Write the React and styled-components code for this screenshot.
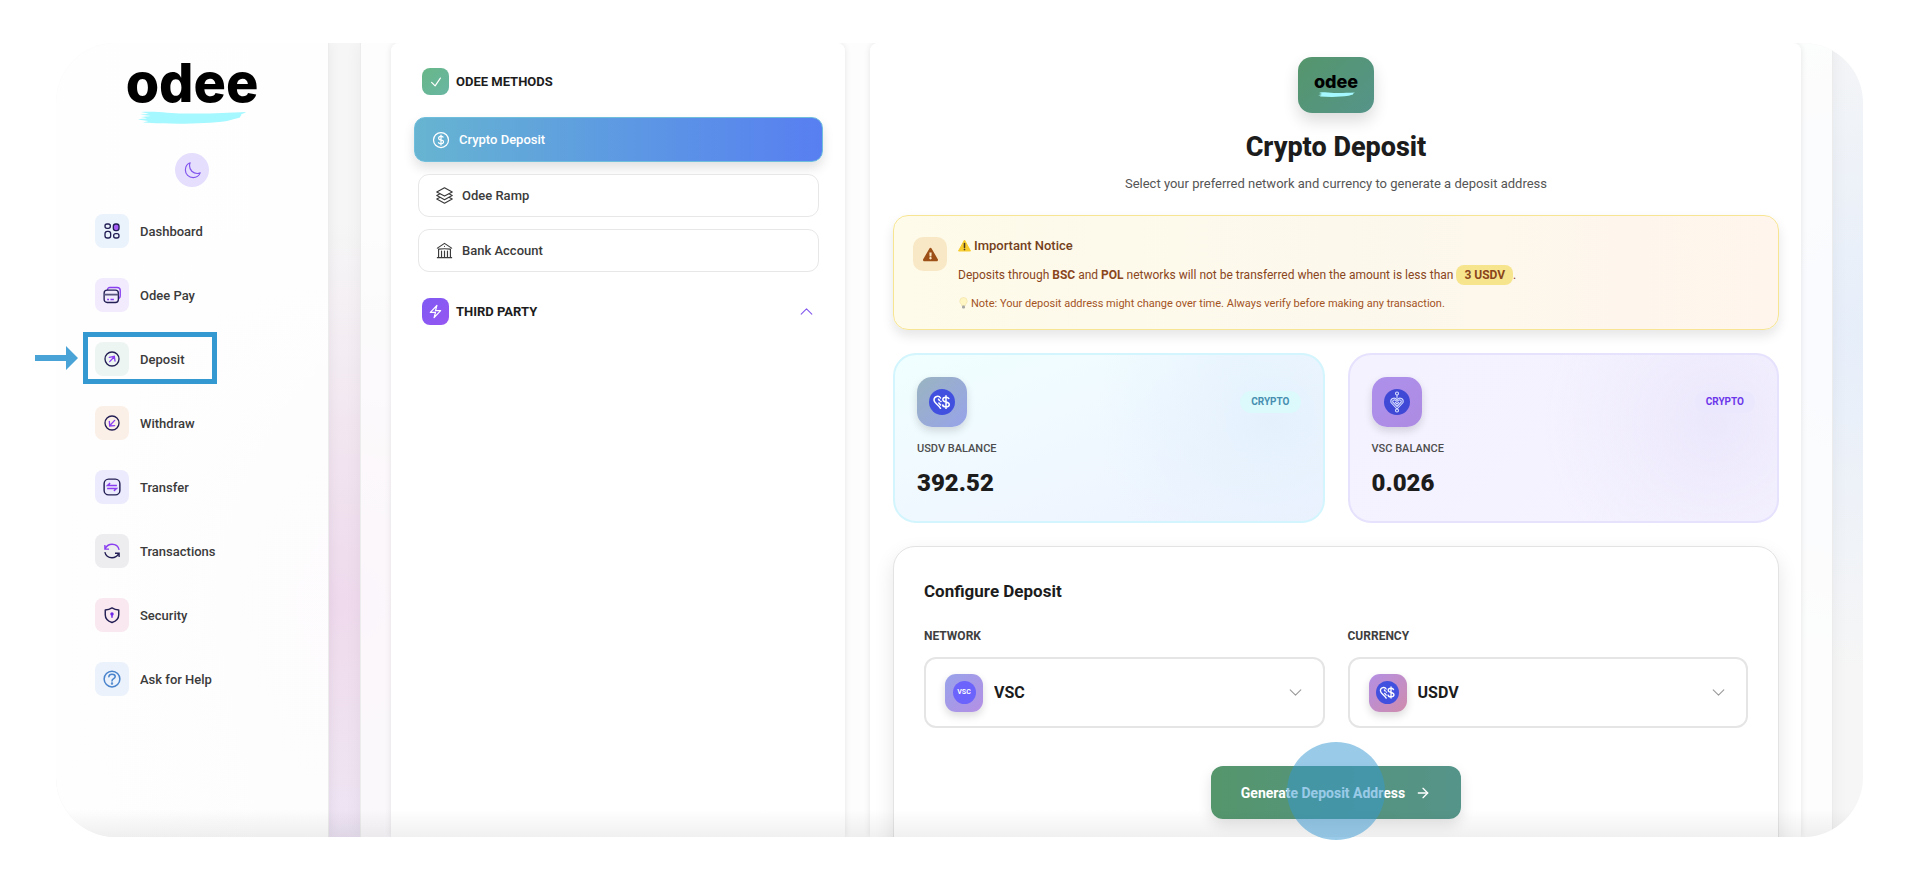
import React, { useState } from 'react';
import styled, { createGlobalStyle } from 'styled-components';
import {
  HiOutlineMoon,
  HiOutlineCheck,
  HiOutlineBolt,
  HiOutlineCurrencyDollar,
  HiOutlineSquare3Stack3D,
  HiOutlineBuildingLibrary,
  HiOutlineChevronUp,
  HiOutlineChevronDown,
} from 'react-icons/hi2';
import { FaExclamationTriangle } from 'react-icons/fa';
import { ArrowRight } from 'lucide-react';

const NAVY = '#231f55';
const VIOLET = '#8a3ff0';

const DashboardIcon = () => (
  <svg width='16' height='16' viewBox='0 0 24 24' fill='none' stroke={NAVY} strokeWidth='2'>
    <rect x='1.500' y='1.500' width='8' height='6.500' rx='3' />
    <rect x='14' y='1.500' width='8.500' height='10' rx='3.500' fill='#a55cf5' />
    <rect x='1.500' y='12.500' width='8.500' height='10' rx='3.500' />
    <rect x='14.500' y='16' width='8' height='6.500' rx='3' />
  </svg>
);

const PayIcon = () => (
  <svg width='18' height='18' viewBox='0 0 24 24' fill='none' strokeWidth='1.800'>
    <path d='M6 5.500C6 3 7.200 2 9.200 2h9.600C21.500 2 23 3.500 23 6v6.500c0 2.500-.8 3.700-2.600 4.100' stroke={VIOLET} />
    <rect x='1.500' y='5.500' width='19' height='16.500' rx='4' stroke={NAVY} />
    <path d='M1.500 11.500h19' stroke='#5b5880' strokeWidth='2.400' />
    <path d='M5.500 18h2.500M10 18h4.500' stroke={VIOLET} />
  </svg>
);

const DepositIcon = () => (
  <svg width='16' height='16' viewBox='0 0 24 24' fill='none' strokeWidth='2' strokeLinecap='round'>
    <circle cx='12' cy='12' r='10.500' stroke={NAVY} />
    <path d='M8.500 16l6.500-7M8 9.500l7.500-1.500 1 7' stroke={VIOLET} />
  </svg>
);

const WithdrawIcon = () => (
  <svg width='16' height='16' viewBox='0 0 24 24' fill='none' strokeWidth='2' strokeLinecap='round'>
    <circle cx='12' cy='12' r='10.500' stroke={NAVY} />
    <path d='M16 8l-6.500 7M8 9.500l.5 7 7.500-.5' stroke={VIOLET} />
  </svg>
);

const TransferIcon = () => (
  <svg width='18' height='18' viewBox='0 0 24 24' fill='none' strokeWidth='1.900'>
    <rect x='1.500' y='1.500' width='21' height='21' rx='6' stroke={NAVY} />
    <path d='M18.500 10H6l3.500-3.200M5.500 14H18l-3.500 3.200' stroke={VIOLET} />
  </svg>
);

const TransactionsIcon = () => (
  <svg width='18' height='18' viewBox='0 0 24 24' fill='none' strokeWidth='1.800'>
    <path d='M21.500 10.500C20.500 6 16.500 3 12 3 8 3 5 5 3 8.500M2.500 4v5.500h5.500' stroke={VIOLET} />
    <path d='M2.500 13.500C3.500 18 7.500 21 12 21c4 0 7-2 9-5.500M21.500 20v-5h-5.500' stroke={NAVY} />
  </svg>
);

const SecurityIcon = () => (
  <svg width='18' height='18' viewBox='0 0 24 24' fill='none'>
    <path
      d='M12 2.500c3 2 6 2.700 9 2.800v6.200c0 5-3.200 8.400-9 10.500-5.800-2.100-9-5.500-9-10.500V5.300c3-.1 6-.8 9-2.800z'
      stroke={NAVY}
      strokeWidth='1.900'
      strokeLinejoin='round'
    />
    <circle cx='12' cy='10.500' r='2.300' fill='#6f24e8' />
    <path d='M12 11v4.500' stroke='#6f24e8' strokeWidth='2' />
  </svg>
);

const HelpIcon = () => (
  <svg width='18' height='18' viewBox='0 0 24 24' fill='none' stroke='#4a84cc' strokeWidth='2' strokeLinecap='round'>
    <circle cx='12' cy='12' r='10.500' />
    <path d='M7.800 9C8 6.800 9.800 5.800 12 5.800c2.500 0 4.300 1.200 4.300 3.200 0 2.600-4.300 2.600-4.300 5.500' />
    <circle cx='12' cy='18' r='.6' />
  </svg>
);

const Brush = ({ width, height }) => (
  <svg width={width} height={height} viewBox='0 0 108 13' preserveAspectRatio='none' aria-hidden='true'>
    <path
      d='M3 1C22 0 34 3 50 2.500 70 3 90 1.500 108 1c-2 1.500-4 1.500-5 2.500 1 1-1 1.500-1 3-3 1-8 2-13 3.500C66 13 34 13.500 5 11.500c2-.8 4-.5 5-1.500L0 8.500c3-1 6-.5 9-1.300L3 6c4-.5 7-.5 10-1L2 3.500c4-.4 6-.2 9-.8z'
      fill='#a5f8ff'
    />
  </svg>
);

const UsdvCoin = ({ size }) => (
  <svg width={size} height={size} viewBox='0 0 26 26' fill='none' aria-hidden='true'>
    <circle cx='13' cy='13' r='13' fill='#4250e0' />
    <path
      d='M11.500 9C10 6.300 5 7 5 11c0 3 4.500 4.800 6.500 8.300M9.800 14l1.700 2M9.500 10.200l1 1.200M11.800 12.500h.2'
      stroke='#fff'
      strokeWidth='1.500'
      strokeLinecap='round'
    />
    <path
      d='M20 10.200c-.3-1.500-1.600-2-3.200-2s-3 .8-3 2.300c0 3.400 6.500 1.600 6.500 5 0 1.600-1.500 2.400-3.300 2.400s-3.400-.8-3.500-2.500M17 6.300v13.600'
      stroke='#fff'
      strokeWidth='1.500'
    />
  </svg>
);

const VscCoin = ({ size }) => (
  <svg width={size} height={size} viewBox='0 0 26 26' fill='none' stroke='#d5dcff' strokeWidth='1.100' aria-hidden='true'>
    <circle cx='13' cy='13' r='13' fill='#4048d6' stroke='none' />
    <circle cx='13' cy='4.500' r='1.500' />
    <circle cx='13' cy='21.500' r='1.500' />
    <path d='M13 6v3M13 20l6-6.500c1-3.500-3-6-6-3-3-3-7-.5-6 3L13 20' />
    <path d='M13 17.500l4.300-4.500c.4-2-2-3.200-4.300-.6-2.300-2.600-4.700-1.400-4.300.6z' />
    <path d='M11 13l2 2 2-2' />
  </svg>
);

const WarningSign = () => (
  <svg width='13' height='13' viewBox='0 0 26 26' aria-hidden='true'>
    <path d='M13 2l12 22H1z' fill='#f6cc2e' stroke='#f6cc2e' strokeWidth='2' strokeLinejoin='round' />
    <path d='M13 9v8' stroke='#4a3a20' strokeWidth='3' strokeLinecap='round' />
    <circle cx='13' cy='21' r='1.700' fill='#4a3a20' />
  </svg>
);

const Bulb = () => (
  <svg width='11' height='12' viewBox='0 0 22 24' aria-hidden='true'>
    <path d='M11 1a7.500 7.500 0 0 0-7.500 7.500c0 4 3.500 5 4 9h7c.5-4 4-5 4-9A7.500 7.500 0 0 0 11 1z' fill='#fff6c4' stroke='#eadb9a' />
    <rect x='8' y='17' width='6' height='6' rx='2' fill='#a9a9a4' />
  </svg>
);

const navItems = [
  { label: 'Dashboard', tint: '#eaf2fc', icon: <DashboardIcon /> },
  { label: 'Odee Pay', tint: '#f1ebfd', icon: <PayIcon /> },
  { label: 'Deposit', tint: '#edf5f3', icon: <DepositIcon /> },
  { label: 'Withdraw', tint: '#fbf0e7', icon: <WithdrawIcon /> },
  { label: 'Transfer', tint: '#ecebfd', icon: <TransferIcon /> },
  { label: 'Transactions', tint: '#ededf0', icon: <TransactionsIcon /> },
  { label: 'Security', tint: '#f9e8ef', icon: <SecurityIcon /> },
  { label: 'Ask for Help', tint: '#ebf2fb', icon: <HelpIcon /> },
];

const App = () => {
  const [network, setNetwork] = useState('VSC');
  const [currency, setCurrency] = useState('USDV');

  return (
    <Stage>
      <GlobalStyle />
      <Frame>
        <Sidebar>
          <Logo href='#home'>
            odee
            <Brush width={108} height={13} />
          </Logo>
          <ThemeButton type='button' aria-label='Toggle theme'>
            <HiOutlineMoon size={19} />
          </ThemeButton>
          <nav>
            {navItems.map((item) => (
              <NavItem key={item.label} href='#nav'>
                <NavIcon $tint={item.tint}>{item.icon}</NavIcon>
                {item.label}
              </NavItem>
            ))}
          </nav>
        </Sidebar>

        <Content>
          <Methods>
            <GroupTitle>
              <GroupIcon $from='#67b788' $to='#69b6a3'>
                <HiOutlineCheck size={14} strokeWidth={2} />
              </GroupIcon>
              ODEE METHODS
            </GroupTitle>
            <MethodList>
              <Method type='button' $active>
                <HiOutlineCurrencyDollar size={20} />
                Crypto Deposit
              </Method>
              <Method type='button'>
                <HiOutlineSquare3Stack3D size={19} />
                Odee Ramp
              </Method>
              <Method type='button'>
                <HiOutlineBuildingLibrary size={19} />
                Bank Account
              </Method>
            </MethodList>
            <GroupTitle>
              <GroupIcon $from='#7f5af3' $to='#9656f2'>
                <HiOutlineBolt size={15} strokeWidth={2} />
              </GroupIcon>
              THIRD PARTY
              <Collapse type='button' aria-label='Collapse third party'>
                <HiOutlineChevronUp size={17} />
              </Collapse>
            </GroupTitle>
          </Methods>

          <Panel>
            <Badge>
              odee
              <Brush width={37} height={5} />
            </Badge>
            <Title>Crypto Deposit</Title>
            <Subtitle>Select your preferred network and currency to generate a deposit address</Subtitle>

            <Notice>
              <NoticeIcon>
                <FaExclamationTriangle size={15} />
              </NoticeIcon>
              <div>
                <NoticeTitle>
                  <WarningSign /> Important Notice
                </NoticeTitle>
                <NoticeText>
                  Deposits through <b>BSC</b> and <b>POL</b> networks will not be transferred when the amount is less
                  than <Amount>3 USDV</Amount>.
                </NoticeText>
                <NoticeNote>
                  <Bulb /> Note: Your deposit address might change over time. Always verify before making any
                  transaction.
                </NoticeNote>
              </div>
            </Notice>

            <Columns>
              <Balance $bg='radial-gradient(circle at 88% 40%, #e4f1fd, transparent 45%), linear-gradient(160deg, #f0ffff, #f0f8ff 50%, #eef2ff)' $line='#d3f5fd'>
                <BalanceTop>
                  <CoinBox $size={50} $from='#9ab4c0' $to='#97a3ea'>
                    <UsdvCoin size={26} />
                  </CoinBox>
                  <Chip $bg='#dcf9fc' $color='#468fb0'>CRYPTO</Chip>
                </BalanceTop>
                <BalanceLabel>USDV BALANCE</BalanceLabel>
                <BalanceValue>392.52</BalanceValue>
              </Balance>
              <Balance $bg='radial-gradient(circle at 85% 40%, #ece8fc, transparent 45%), linear-gradient(135deg, #f4f2ff, #f6f3ff)' $line='#e6e1fd'>
                <BalanceTop>
                  <CoinBox $size={50} $from='#ad90ec' $to='#ad8be2'>
                    <VscCoin size={26} />
                  </CoinBox>
                  <Chip $bg='#ebe8fd' $color='#6c37ea'>CRYPTO</Chip>
                </BalanceTop>
                <BalanceLabel>VSC BALANCE</BalanceLabel>
                <BalanceValue>0.026</BalanceValue>
              </Balance>
            </Columns>

            <Configure>
              <h2>Configure Deposit</h2>
              <Columns>
                <Field>
                  <label htmlFor='network'>NETWORK</label>
                  <SelectBox>
                    <CoinBox $size={38} $from='#98a3ea' $to='#b48fe4'>
                      <VscMark>VSC</VscMark>
                    </CoinBox>
                    <select id='network' value={network} onChange={(e) => setNetwork(e.target.value)}>
                      <option>VSC</option>
                      <option>BSC</option>
                      <option>POL</option>
                    </select>
                    <HiOutlineChevronDown size={17} />
                  </SelectBox>
                </Field>
                <Field>
                  <label htmlFor='currency'>CURRENCY</label>
                  <SelectBox>
                    <CoinBox $size={38} $from='#b48fe4' $to='#cf8cac'>
                      <UsdvCoin size={23} />
                    </CoinBox>
                    <select id='currency' value={currency} onChange={(e) => setCurrency(e.target.value)}>
                      <option>USDV</option>
                      <option>VSC</option>
                    </select>
                    <HiOutlineChevronDown size={17} />
                  </SelectBox>
                </Field>
              </Columns>
              <Generate type='button'>
                Generate Deposit Address
                <ArrowRight size={16} strokeWidth={2} />
              </Generate>
            </Configure>
          </Panel>
        </Content>
      </Frame>

      <Pointer viewBox='0 0 43 24' aria-hidden='true'>
        <path d='M0 9h31V0l12 12-12 12v-9H0z' fill='#4aa3d6' />
      </Pointer>
      <Highlight />
      <Tap />
    </Stage>
  );
};

const GlobalStyle = createGlobalStyle`
  * {
    box-sizing: border-box;
  }
  body {
    margin: 0;
    background: #fff;
    color: #1c1c1c;
    font-family: Roboto, 'Liberation Sans', sans-serif;
    font-size: 13px;
  }
  button,
  select {
    font-family: inherit;
  }
  h1, h2, h3, p {
    margin: 0;
  }
`;

const Stage = styled.div`
  position: relative;
  padding: 43px 57px 43px 56px;
`;

const Frame = styled.div`
  position: relative;
  display: flex;
  height: calc(100vh - 86px);
  overflow: hidden;
  border-radius: 60px;
  background:
    radial-gradient(ellipse 500px 380px at 270px 560px, #eed9ec, transparent),
    radial-gradient(ellipse 400px 300px at 280px 900px, #e6e4fa, transparent),
    radial-gradient(ellipse 300px 340px at 100% 290px, #e6eefa, transparent),
    #f6f6f6;
  &::after {
    content: '';
    position: absolute;
    left: 0;
    right: 0;
    bottom: 0;
    height: 28px;
    background: linear-gradient(transparent, rgba(0, 0, 0, 0.06));
    pointer-events: none;
  }
`;

const Sidebar = styled.aside`
  flex: 0 0 273px;
  display: flex;
  flex-direction: column;
  background: linear-gradient(90deg, #fefefe, rgba(255, 255, 255, 0.92));
  border-right: 1px solid #ececec;
  box-shadow: 0 0 12px rgba(0, 0, 0, 0.06);
  nav {
    padding: 11px 0 0 39px;
  }
`;

const Logo = styled.a`
  display: flex;
  flex-direction: column;
  align-items: center;
  height: 90px;
  padding-top: 12px;
  color: #000;
  font: 800 54px/56px Inter, sans-serif;
  text-decoration: none;
`;

const ThemeButton = styled.button`
  align-self: center;
  display: grid;
  place-items: center;
  width: 34px;
  height: 34px;
  margin: 20px 0 16px;
  padding: 0;
  border: 0;
  border-radius: 50%;
  background: #e5defc;
  color: #8257ee;
`;

const NavItem = styled.a`
  display: flex;
  align-items: center;
  gap: 11px;
  height: 34px;
  margin-bottom: 30px;
  color: #3b3b3b;
  font-weight: 500;
  text-decoration: none;
`;

const NavIcon = styled.span`
  display: grid;
  place-items: center;
  width: 34px;
  height: 34px;
  border-radius: 8px;
  background: ${({ $tint }) => $tint};
`;

const Content = styled.main`
  flex: 1;
  display: flex;
  gap: 25px;
  margin: 0 30px 0 31px;
  padding: 0 31px 0 30px;
  background: rgba(255, 255, 255, 0.75);
  border: solid #ececec;
  border-width: 0 1px;
  box-shadow: 0 0 16px rgba(0, 0, 0, 0.05);
`;

const Methods = styled.section`
  flex: 0 0 454px;
  padding: 25px 26px 25px 27px;
  border-radius: 8px 8px 0 0;
  background: rgba(255, 255, 255, 0.93);
  box-shadow: 0 0 6px rgba(0, 0, 0, 0.1);
`;

const GroupTitle = styled.h3`
  display: flex;
  align-items: center;
  gap: 7px;
  padding: 0 4px;
  font-size: 13px;
  font-weight: 700;
`;

const GroupIcon = styled.span`
  display: grid;
  place-items: center;
  width: 27px;
  height: 27px;
  border-radius: 8px;
  color: #fff;
  background: linear-gradient(135deg, ${({ $from }) => $from}, ${({ $to }) => $to});
`;

const Collapse = styled.button`
  display: flex;
  margin-left: auto;
  padding: 0;
  border: 0;
  background: none;
  color: #8257ee;
`;

const MethodList = styled.div`
  display: flex;
  flex-direction: column;
  gap: 12px;
  padding: 22px 0 26px;
`;

const Method = styled.button`
  display: flex;
  align-items: center;
  gap: 8px;
  height: ${({ $active }) => ($active ? 45 : 43)}px;
  margin: ${({ $active }) => ($active ? '0 -4px' : '0')};
  padding: 0 16px;
  border: 1px solid ${({ $active }) => ($active ? '#6fbedb' : '#e7e7e7')};
  border-radius: 11px;
  background: ${({ $active }) => ($active ? 'linear-gradient(90deg, #66b4d1, #5c97e4 55%, #587ff1)' : '#fff')};
  box-shadow: ${({ $active }) => ($active ? '0 6px 12px rgba(0, 0, 0, 0.12)' : 'none')};
  color: ${({ $active }) => ($active ? '#fff' : '#3b3b3b')};
  font-size: 13px;
  font-weight: 500;
`;

const Panel = styled.section`
  flex: 1;
  display: flex;
  flex-direction: column;
  align-items: stretch;
  min-width: 0;
  padding: 14px 22px 14px 23px;
  border-radius: 8px 8px 0 0;
  background: rgba(255, 255, 255, 0.88);
  box-shadow: 0 0 6px rgba(0, 0, 0, 0.1);
`;

const Badge = styled.div`
  align-self: center;
  display: flex;
  flex-direction: column;
  align-items: center;
  flex: 0 0 56px;
  width: 76px;
  padding-top: 15px;
  border-radius: 14px;
  background: linear-gradient(135deg, #55966c, #559489);
  box-shadow: 0 8px 16px rgba(0, 0, 0, 0.14);
  color: #000;
  font: 800 18px/20px Inter, sans-serif;
`;

const Title = styled.h1`
  margin-top: 16px;
  font-size: 27px;
  line-height: 36px;
  font-weight: 800;
  text-align: center;
`;

const Subtitle = styled.p`
  margin: 9px 0 21px;
  color: #555;
  font-size: 13px;
  line-height: 20px;
  text-align: center;
`;

const Notice = styled.div`
  display: flex;
  gap: 11px;
  min-height: 115px;
  padding: 20px 19px;
  border: 1px solid #f7e593;
  border-radius: 15px;
  background: linear-gradient(90deg, #fffbea, #fcf8ec 50%, #fff5ec);
  box-shadow: 0 6px 12px rgba(0, 0, 0, 0.1);
`;

const NoticeIcon = styled.span`
  display: grid;
  place-items: center;
  width: 34px;
  height: 34px;
  margin-top: 1px;
  border-radius: 10px;
  background: #f8e8c6;
  color: #9c4f16;
`;

const NoticeTitle = styled.h3`
  display: flex;
  align-items: center;
  gap: 3px;
  height: 18px;
  color: #74401c;
  font-size: 13px;
  font-weight: 500;
`;

const NoticeText = styled.p`
  margin-top: 11px;
  color: #8a461c;
  font-size: 12px;
  line-height: 20px;
`;

const Amount = styled.b`
  display: inline-block;
  padding: 0 8px;
  border-radius: 8px;
  background: #f7e58e;
`;

const NoticeNote = styled.p`
  display: flex;
  align-items: center;
  gap: 2px;
  height: 16px;
  margin-top: 10px;
  color: #a3541f;
  font-size: 11px;
`;

const Columns = styled.div`
  display: grid;
  grid-template-columns: 1fr 1fr;
  gap: 23px;
`;

const Balance = styled.div`
  height: 170px;
  margin-top: 23px;
  padding: 22px;
  border: 2px solid ${({ $line }) => $line};
  border-radius: 23px;
  background: ${({ $bg }) => $bg};
`;

const BalanceTop = styled.div`
  display: flex;
  align-items: center;
  justify-content: space-between;
`;

const CoinBox = styled.span`
  display: grid;
  place-items: center;
  width: ${({ $size }) => $size}px;
  height: ${({ $size }) => $size}px;
  border-radius: ${({ $size }) => ($size > 40 ? 15 : 11)}px;
  background: linear-gradient(135deg, ${({ $from }) => $from}, ${({ $to }) => $to});
  box-shadow: 0 4px 8px rgba(0, 0, 0, 0.14);
`;

const Chip = styled.span`
  padding: 0 11px;
  border-radius: 11px;
  background: ${({ $bg }) => $bg};
  color: ${({ $color }) => $color};
  font-size: 10px;
  line-height: 22px;
  font-weight: 700;
`;

const BalanceLabel = styled.p`
  margin-top: 14px;
  color: #4d4d4d;
  font-size: 11px;
  line-height: 16px;
  font-weight: 500;
`;

const BalanceValue = styled.p`
  margin-top: 10px;
  font-size: 24px;
  line-height: 32px;
  font-weight: 900;
`;

const Configure = styled.section`
  display: flex;
  flex-direction: column;
  margin-top: 23px;
  padding: 32px 30px 40px;
  border: 1px solid #e3e3e3;
  border-radius: 22px;
  background: #fff;
  box-shadow: 0 8px 20px rgba(0, 0, 0, 0.1);
  h2 {
    margin-bottom: 23px;
    font-size: 17px;
    line-height: 24px;
    font-weight: 700;
  }
`;

const Field = styled.div`
  label {
    display: block;
    color: #3f3f3f;
    font-size: 12px;
    line-height: 20px;
    font-weight: 700;
  }
`;

const SelectBox = styled.div`
  display: flex;
  align-items: center;
  gap: 11px;
  height: 71px;
  margin-top: 11px;
  padding: 0 19px;
  border: 2px solid #e5e5e5;
  border-radius: 12px;
  color: #9a9a9a;
  select {
    flex: 1;
    padding: 0;
    border: 0;
    appearance: none;
    background: none;
    color: #1c1c1c;
    font-size: 16px;
    font-weight: 700;
  }
`;

const VscMark = styled.span`
  width: 23px;
  border-radius: 50%;
  background: #6b63fb;
  color: #fff;
  font-size: 7px;
  line-height: 23px;
  font-weight: 700;
  text-align: center;
`;

const Generate = styled.button`
  align-self: center;
  display: flex;
  align-items: center;
  gap: 10px;
  height: 53px;
  margin-top: 38px;
  padding: 0 30px;
  border: 0;
  border-radius: 12px;
  background: linear-gradient(90deg, #55966c, #559480 65%, #559489);
  box-shadow: 0 6px 14px rgba(0, 0, 0, 0.12);
  color: #fff;
  font-size: 14px;
  font-weight: 700;
`;

const Pointer = styled.svg`
  position: absolute;
  top: 346px;
  left: 35px;
  width: 43px;
  height: 24px;
`;

const Highlight = styled.div`
  position: absolute;
  top: 332px;
  left: 83px;
  width: 134px;
  height: 52px;
  border: 5px solid #3498d1;
  pointer-events: none;
`;

/* tap marker sits on the centre of the deposit panel */
const Tap = styled.div`
  position: absolute;
  top: 742px;
  left: calc(50% + 376px);
  width: 98px;
  height: 98px;
  transform: translateX(-50%);
  border-radius: 50%;
  background: rgba(52, 152, 209, 0.5);
  pointer-events: none;
`;

export default App;
